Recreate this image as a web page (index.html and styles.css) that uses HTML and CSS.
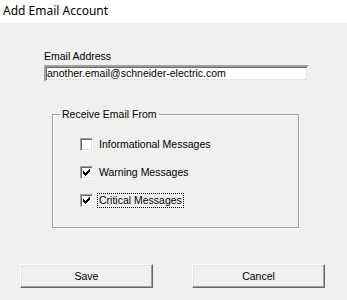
FILE: index.html
```html
<!DOCTYPE html>
<html>
<head>
<meta charset="utf-8">
<link rel="stylesheet" href="styles.css">
</head>
<body>
<div class="dialog">
  <div class="title">Add Email Account</div>
  <div class="main">
    <div class="form">
      <div class="label">Email Address</div>
      <div class="input">another.email@schneider-electric.com</div>
      <fieldset class="group">
        <legend class="legend">Receive Email From</legend>
        <div class="row">
          <span class="box"></span>
          <span class="text">Informational Messages</span>
        </div>
        <div class="row">
          <span class="box"><svg width="7" height="7" viewBox="0 0 7 7" fill="#000"><rect x="0" y="2" width="1" height="3"/><rect x="1" y="3" width="1" height="3"/><rect x="2" y="4" width="1" height="3"/><rect x="3" y="3" width="1" height="3"/><rect x="4" y="2" width="1" height="3"/><rect x="5" y="1" width="1" height="3"/><rect x="6" y="0" width="1" height="3"/></svg></span>
          <span class="text">Warning Messages</span>
        </div>
        <div class="row">
          <span class="box"><svg width="7" height="7" viewBox="0 0 7 7" fill="#000"><rect x="0" y="2" width="1" height="3"/><rect x="1" y="3" width="1" height="3"/><rect x="2" y="4" width="1" height="3"/><rect x="3" y="3" width="1" height="3"/><rect x="4" y="2" width="1" height="3"/><rect x="5" y="1" width="1" height="3"/><rect x="6" y="0" width="1" height="3"/></svg></span>
          <span class="text focus">Critical Messages</span>
        </div>
      </fieldset>
    </div>
    <div class="buttons">
      <div class="btn">Save</div>
      <div class="btn">Cancel</div>
    </div>
  </div>
</div>
</body>
</html>
```
FILE: styles.css
```css
html, body {
  margin: 0;
  padding: 0;
  background: #f0f0f0;
}
.dialog {
  width: 347px;
  height: 300px;
  display: flex;
  flex-direction: column;
  font-family: "Liberation Sans", Arial, sans-serif;
  font-size: 10.5px;
  color: #000;
}
.title {
  height: 23px;
  background: #fff;
  font-family: "Noto Sans", "Open Sans", sans-serif;
  font-size: 12px;
  line-height: 21px;
  padding-left: 3px;
}
.main {
  flex: 1;
  background: #f0f0f0;
}
.form {
  padding: 27px 0 0 44px;
}
.label {
  line-height: 13px;
  height: 13px;
}
.input {
  margin-top: 2px;
  width: 259px;
  height: 13px;
  line-height: 13px;
  padding: 0 1px;
  background: #fff;
  border: 2px solid;
  border-color: #a0a0a0 #f0f0f0 #f0f0f0 #a0a0a0;
  box-shadow: inset 1px 1px 0 #696969, inset -1px -1px 0 #e3e3e3;
  white-space: nowrap;
  overflow: hidden;
}
.group {
  margin: 26px 0 0 8px;
  width: 245px;
  padding: 17px 0 20px 0;
  border: 1px solid #a0a0a0;
  box-shadow: inset 1px 1px 0 #fff, 1px 1px 0 #fff;
  display: flex;
  flex-direction: column;
  gap: 15px;
  box-sizing: content-box;
  min-width: 0;
}
.legend {
  margin-left: 7px;
  padding: 0 2px;
  line-height: 13px;
}
.row {
  display: flex;
  align-items: flex-start;
  padding-left: 27px;
  height: 13px;
}
.box {
  width: 9px;
  height: 9px;
  background: #fff;
  border: 1px solid;
  border-color: #a0a0a0 #fff #fff #a0a0a0;
  box-shadow: inset 1px 1px 0 #696969, inset -1px -1px 0 #e3e3e3;
  padding: 1px;
  display: flex;
  align-items: center;
  justify-content: center;
  flex: none;
}
.box svg {
  display: block;
}
.text {
  margin-left: 4px;
  padding: 0 1px;
  line-height: 13px;
  border: 1px dotted transparent;
  margin-top: -1px;
  white-space: nowrap;
}
.text.focus {
  border-color: #000;
}
.buttons {
  display: flex;
  gap: 39px;
  padding: 36px 0 0 20px;
}
.btn {
  width: 131px;
  height: 22px;
  line-height: 22px;
  text-align: center;
  background: #f0f0f0;
  border: 1px solid;
  border-color: #fff #696969 #696969 #fff;
  box-shadow: inset -1px -1px 0 #a0a0a0, inset 1px 1px 0 #e3e3e3;
}
```
